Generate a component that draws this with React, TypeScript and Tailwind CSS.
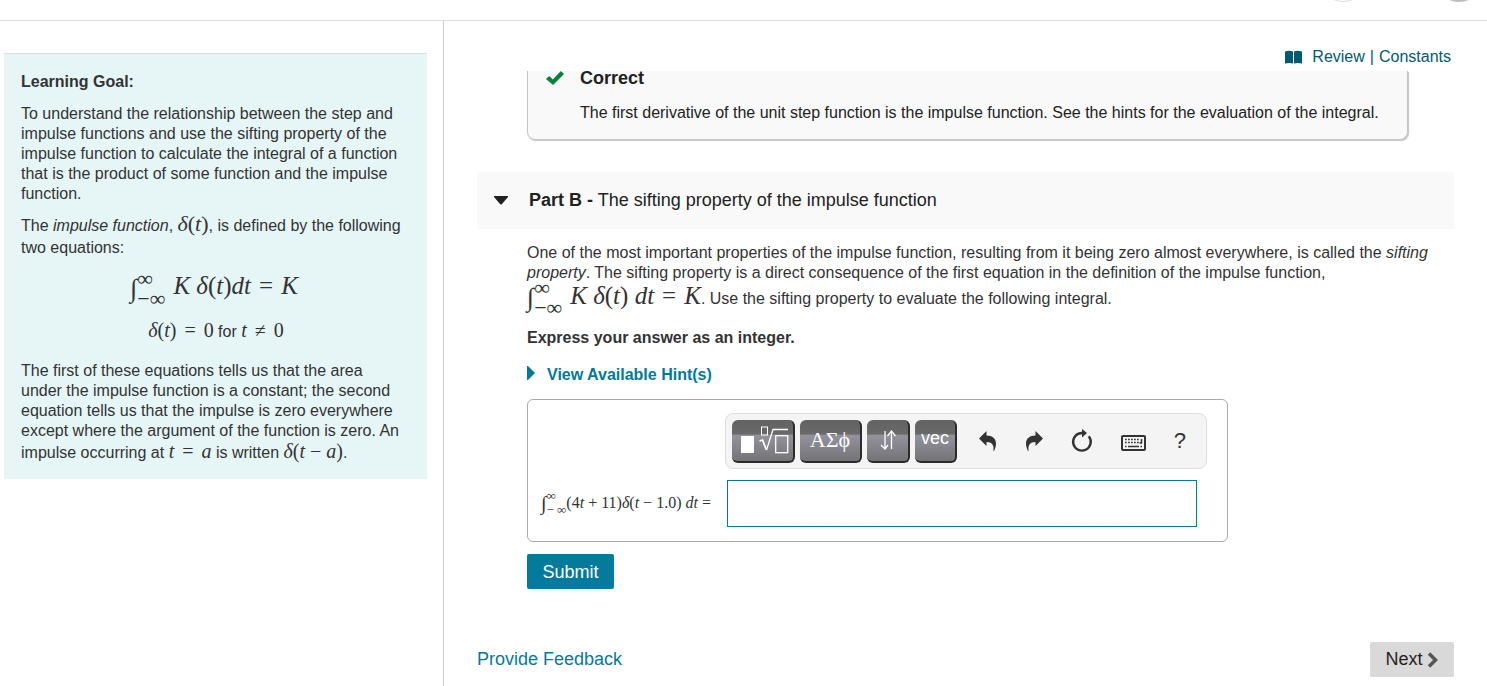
import React from 'react'

const TOOL_BUTTON =
  'h-[43px] flex items-center justify-center rounded-md text-white border-r-2 border-b-2 border-[#2b2b2b] bg-[linear-gradient(to_bottom,#626262_0%,#6a6a6a_35%,#94929c_36%,#757478_100%)]'

// Integral sign with limits from minus infinity to infinity
const Integral = () => (
  <span className="inline-flex items-center align-middle h-7 mr-2 leading-5">
    <span className="text-[26px]">∫</span>
    <span className="flex flex-col text-[22px]">
      <span>∞</span>
      <span>−∞</span>
    </span>
  </span>
)

const SmallIntegral = () => (
  <span className="inline-flex items-center leading-[14px]">
    <span className="text-[20px]">∫</span>
    <span className="flex flex-col text-[13px]">
      <span>∞</span>
      <span>− ∞</span>
    </span>
  </span>
)

const Equals = () => <span className="mx-2">=</span>

const MathText = ({ children, className = 'text-[20px]' }: { children: React.ReactNode; className?: string }) => (
  <span className={`font-['Liberation_Serif',serif] whitespace-nowrap leading-none ${className}`}>{children}</span>
)

const LearningGoal = () => (
  <aside className="w-[444px] shrink-0 border-r border-[#cccccc] pt-8 pl-1 pr-4">
    <section className="bg-[#e6f6f7] border-t border-[#d9dfe0] text-[#333333] pl-[17px] pr-5 pt-[18px] pb-4 text-[16px] leading-5">
      <h2 className="font-bold mb-3">Learning Goal:</h2>
      <p className="mb-[9px]">
        To understand the relationship between the step and impulse functions and use the sifting property of the
        impulse function to calculate the integral of a function that is the product of some function and the impulse
        function.
      </p>
      <p className="leading-[22px] mb-[14px]">
        The <em>impulse function</em>, <MathText className="text-[22px]"><i>δ</i>(<i>t</i>)</MathText>, is defined by
        the following two equations:
      </p>
      <div className="flex justify-center h-[30px] items-center mb-[14px]">
        <MathText className="text-[25px]">
          <Integral />
          <i>K δ</i>(<i>t</i>)<i>dt</i><Equals /><i>K</i>
        </MathText>
      </div>
      <p className="text-center leading-[30px] mb-[14px] pl-1">
        <MathText><i>δ</i>(<i>t</i>)<span className="mx-2">=</span>0</MathText> for{' '}
        <MathText><i>t</i><span className="mx-2">≠</span>0</MathText>
      </p>
      <p>
        The first of these equations tells us that the area under the impulse function is a constant; the second
        equation tells us that the impulse is zero everywhere except where the argument of the function is zero. An
        impulse occurring at <MathText><i>t</i><span className="mx-2">=</span><i>a</i></MathText> is written{' '}
        <MathText><i>δ</i>(<i>t</i> − <i>a</i>)</MathText>.
      </p>
    </section>
  </aside>
)

const Toolbar = () => (
  <div className="flex items-center h-14 w-[482px] rounded-lg border border-[#dddddd] bg-[#f4f4f4] px-[6px] text-[#333333]">
    <div className="flex gap-[5px]">
      <button type="button" aria-label="Templates" className={`${TOOL_BUTTON} w-[63px]`}>
        <svg width="52" height="32" viewBox="0 0 52 32" fill="none" stroke="currentColor">
          <rect x="4" y="12" width="13" height="17" fill="currentColor" stroke="none" />
          <rect x="24.5" y="3" width="6" height="8" />
          <path d="M22.500 17l3-1 4 10" strokeWidth="1.800" />
          <path d="M29.500 26l6.500-20.500h15" strokeWidth="1.300" />
          <rect x="38.700" y="11.700" width="12" height="17" strokeWidth="1.300" />
        </svg>
      </button>
      <button type="button" className={`${TOOL_BUTTON} w-[62px] font-['Liberation_Serif',serif] text-[22px]`}>ΑΣϕ</button>
      <button type="button" aria-label="Sub and superscript" className={`${TOOL_BUTTON} w-[43px]`}>
        <svg width="18" height="22" viewBox="0 0 18 22" fill="none" stroke="currentColor" strokeWidth="1.300">
          <path d="M6 2v18M2 16l4 4 3-4M12.500 20V2M8.500 7l4-5 4 5" />
        </svg>
      </button>
      <button type="button" className={`${TOOL_BUTTON} w-[42px] pb-1 text-[18px]`}>vec</button>
    </div>
    <div className="flex flex-1 items-center justify-between pl-[22px] pr-[14px]">
      <button type="button" aria-label="Undo">
        <svg width="18" height="20" viewBox="0 0 18 20" fill="currentColor">
          <path d="M0 7.500L7.500 0v4.500c6 0 9.500 3 9.500 8 0 2.500-.8 5-2 7.500h-.6c.8-6-1.400-9-6.900-9v4z" />
        </svg>
      </button>
      <button type="button" aria-label="Redo">
        <svg width="18" height="20" viewBox="0 0 18 20" fill="currentColor">
          <path d="M18 7.500L10.500 0v4.500c-6 0-9.500 3-9.500 8 0 2.500.8 5 2 7.500h.6c-.8-6 1.400-9 6.900-9v4z" />
        </svg>
      </button>
      <button type="button" aria-label="Reset">
        <svg width="22" height="24" viewBox="0 0 22 24" fill="none" stroke="currentColor" strokeWidth="2.400">
          <path d="M17.800 7.300a8.800 8.800 0 1 1-6.800-3.300" />
          <path d="M11 0l5 4-5 4.500z" fill="currentColor" stroke="none" />
        </svg>
      </button>
      <button type="button" aria-label="Keyboard shortcuts" className="pt-1">
        <svg width="25" height="16" viewBox="0 0 25 16" fill="none" stroke="currentColor">
          <rect x="1" y="1" width="23" height="14" rx="1" strokeWidth="2" />
          <path d="M4 4.500h15M4 7.500h14" strokeWidth="1.500" strokeDasharray="1.700 1.300" />
          <path d="M20.500 4v4h-2M7 11.500h11M4 11.500h1.500M19.500 11.500h1.500" strokeWidth="1.500" />
        </svg>
      </button>
      <button type="button" aria-label="Help" className="text-[22px] leading-6">?</button>
    </div>
  </div>
)

const AnswerBox = () => (
  <div className="w-[701px] h-[143px] rounded-md border border-[#a9a9a9] pt-[13px] pl-[13px]">
    <div className="pl-[184px]">
      <Toolbar />
    </div>
    <div className="flex items-center mt-[11px]">
      <label htmlFor="answer" className="w-[186px] shrink-0 flex items-center pb-0.5 font-['Liberation_Serif',serif] text-[16px] whitespace-nowrap">
        <SmallIntegral />
        <span>(4<i>t</i> + 11)<i>δ</i>(<i>t</i> − 1.0) <i>dt</i> =</span>
      </label>
      <input id="answer" type="text" className="w-[470px] h-[47px] border border-[#007a96] bg-white px-2 text-[18px] outline-none" />
    </div>
  </div>
)

const PartB = () => (
  <section>
    <h2 className="flex items-center h-[57px] bg-[#f9f9f9] text-[18px] text-[#222222] pl-[17px]">
      <svg width="14" height="9" viewBox="0 0 14 9" className="mr-[21px]">
        <path d="M0 0h14v1L7.500 8.500h-1L0 1z" fill="currentColor" />
      </svg>
      <span><b>Part B -</b> The sifting property of the impulse function</span>
    </h2>
    <div className="pl-[50px] pt-[14px] text-[16px] leading-5 text-[#333333]">
      <p>
        One of the most important properties of the impulse function, resulting from it being zero almost everywhere,
        is called the <em>sifting property</em>. The sifting property is a direct consequence of the first equation in
        the definition of the impulse function,{' '}
        <MathText className="text-[25px]">
          <Integral />
          <i>K δ</i>(<i>t</i>) <i>dt</i><Equals /><i>K</i>
        </MathText>
        . Use the sifting property to evaluate the following integral.
      </p>
      <p className="font-bold mt-4">Express your answer as an integer.</p>
      <button type="button" className="flex items-center mt-[17px] font-bold text-[#007a9c]">
        <svg width="8" height="14" viewBox="0 0 8 14" className="mr-3 mb-1">
          <path d="M0 0h1l7 7-7 7H0z" fill="currentColor" />
        </svg>
        View Available Hint(s)
      </button>
      <div className="mt-[14px]">
        <AnswerBox />
      </div>
      <button type="button" className="mt-3 h-[35px] w-[87px] rounded-xs bg-[#047a9c] text-white text-[18px]">Submit</button>
    </div>
  </section>
)

export default function App() {
  return (
    <div className="min-h-screen flex flex-col bg-white font-['Liberation_Sans',Arial,sans-serif]">
      <header className="h-[21px] shrink-0 overflow-hidden border-b border-[#dddddd] flex items-end justify-end gap-[68px] pr-1 pb-[18px]">
        <span className="size-12 shrink-0 rounded-full border border-[#dddddd]" />
        <span className="size-12 shrink-0 rounded-full border-2 border-[#bbbbbb]" />
      </header>

      <div className="flex flex-1">
        <LearningGoal />

        <main className="flex-1 min-w-0 flex flex-col px-[33px]">
          <nav className="flex items-center justify-end h-[50px] pt-[22px] pr-[3px] text-[16px] text-[#005a70]">
            <svg width="17" height="14" viewBox="0 0 17 14" fill="currentColor" className="mr-[10px]">
              <path d="M0 1.500C3 .5 6 .5 8 1.500v12c-2-.7-5-.7-8 0zM9 1.500c2-1 5-1 8 0v12c-3-.7-6-.7-8 0z" />
            </svg>
            <a href="#review">Review</a>
            <span className="px-[5px]">|</span>
            <a href="#constants">Constants</a>
          </nav>

          <div className="ml-[50px] w-fit rounded-b-lg border border-t-0 border-[#c4c4c4] bg-[#f9f9f9] shadow-[1px_1px_1px_#c4c4c4] pl-[18px] pr-7 pb-4 text-[#222222]">
            <h3 className="flex items-center h-[14px] text-[18px] font-bold leading-[14px]">
              <svg width="18" height="14" viewBox="0 0 17 13" className="mr-4">
                <path d="M0 7.500l3-3 3.500 3.300L14 0l3 2.700L6.700 13z" fill="#038238" />
              </svg>
              Correct
            </h3>
            <p className="pl-[34px] mt-[18px] text-[16px] leading-5">
              The first derivative of the unit step function is the impulse function. See the hints for the evaluation
              of the integral.
            </p>
          </div>

          <div className="mt-8">
            <PartB />
          </div>

          <footer className="flex items-center justify-between mt-auto pb-[9px] text-[18px]">
            <a href="#feedback" className="text-[#047a9c]">Provide Feedback</a>
            <button type="button" className="h-[35px] w-[84px] flex items-center justify-center gap-1 rounded-xs bg-[#d9d9d9] text-[#222222]">
              Next
              <svg width="12" height="16" viewBox="0 0 12 16" fill="none" stroke="#555555" strokeWidth="3.500">
                <path d="M2 1.500L8.500 8 2 14.500" />
              </svg>
            </button>
          </footer>
        </main>
      </div>
    </div>
  )
}
